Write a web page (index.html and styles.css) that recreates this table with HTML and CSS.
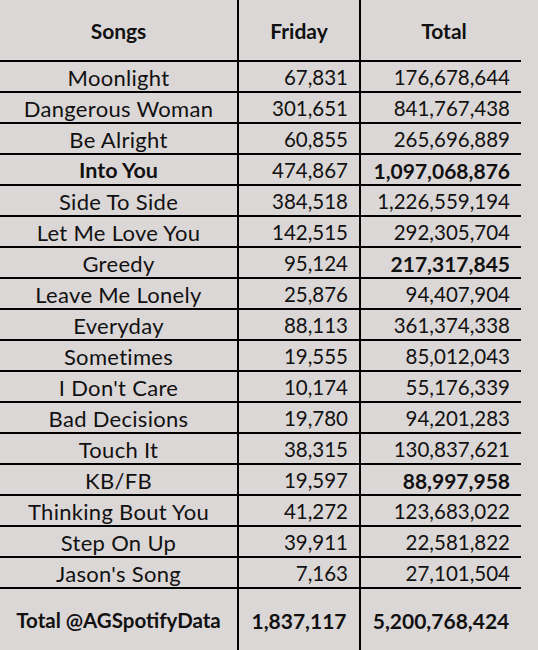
FILE: index.html
```html
<!DOCTYPE html>
<html>
<head>
<meta charset="utf-8">
<link rel="stylesheet" href="styles.css">
</head>
<body>
<table class="sheet">
  <thead>
    <tr class="head-row">
      <th class="col-song">Songs</th>
      <th class="col-day">Friday</th>
      <th class="col-total">Total</th>
    </tr>
  </thead>
  <tbody>
    <tr><td class="song">Moonlight</td><td class="num">67,831</td><td class="num">176,678,644</td></tr>
    <tr><td class="song">Dangerous Woman</td><td class="num">301,651</td><td class="num">841,767,438</td></tr>
    <tr><td class="song">Be Alright</td><td class="num">60,855</td><td class="num">265,696,889</td></tr>
    <tr><td class="song strong">Into You</td><td class="num">474,867</td><td class="num strong">1,097,068,876</td></tr>
    <tr><td class="song">Side To Side</td><td class="num">384,518</td><td class="num">1,226,559,194</td></tr>
    <tr><td class="song">Let Me Love You</td><td class="num">142,515</td><td class="num">292,305,704</td></tr>
    <tr><td class="song">Greedy</td><td class="num">95,124</td><td class="num strong">217,317,845</td></tr>
    <tr><td class="song">Leave Me Lonely</td><td class="num">25,876</td><td class="num">94,407,904</td></tr>
    <tr><td class="song">Everyday</td><td class="num">88,113</td><td class="num">361,374,338</td></tr>
    <tr><td class="song">Sometimes</td><td class="num">19,555</td><td class="num">85,012,043</td></tr>
    <tr><td class="song">I Don't Care</td><td class="num">10,174</td><td class="num">55,176,339</td></tr>
    <tr><td class="song">Bad Decisions</td><td class="num">19,780</td><td class="num">94,201,283</td></tr>
    <tr><td class="song">Touch It</td><td class="num">38,315</td><td class="num">130,837,621</td></tr>
    <tr><td class="song">KB/FB</td><td class="num">19,597</td><td class="num strong">88,997,958</td></tr>
    <tr><td class="song">Thinking Bout You</td><td class="num">41,272</td><td class="num">123,683,022</td></tr>
    <tr><td class="song">Step On Up</td><td class="num">39,911</td><td class="num">22,581,822</td></tr>
    <tr><td class="song">Jason's Song</td><td class="num">7,163</td><td class="num">27,101,504</td></tr>
  </tbody>
  <tfoot>
    <tr class="foot-row">
      <td class="foot-label">Total @AGSpotifyData</td>
      <td class="foot-num">1,837,117</td>
      <td class="foot-num">5,200,768,424</td>
    </tr>
  </tfoot>
</table>
</body>
</html>
```
FILE: styles.css
```css
html, body {
  margin: 0;
  padding: 0;
  background: #dcd7d7;
}
body {
  width: 538px;
  height: 650px;
  overflow: hidden;
  font-family: "Lato", "Open Sans", sans-serif;
  color: #111;
}
.sheet {
  border-collapse: collapse;
  width: 521px;
  table-layout: fixed;
}
.sheet th, .sheet td {
  padding: 0;
  line-height: 1;
  border: 2px solid #000;
  white-space: nowrap;
}
.sheet tr > :first-child { border-left: none; }
.sheet tr > :last-child { border-right: none; }
.sheet thead th { border-top: none; }
.sheet tfoot td { border-bottom: none; }
.col-song { width: 237px; }
.col-day { width: 120px; }
.col-total { width: auto; }
.head-row { height: 61px; }
.head-row th { font-weight: 700; text-align: center; font-size: 21px; }
.head-row .col-total { padding-left: 6px; }
.sheet tbody tr { height: 31px; }
.song { text-align: center; font-size: 22px; letter-spacing: 0.3px; padding-top: 2px !important; }
.num { text-align: right; padding-right: 11px !important; padding-top: 2px !important; font-size: 20.5px; }
.num.strong { font-size: 21px; }
.strong { font-weight: 700; }
.song.strong { font-size: 21.5px; letter-spacing: 0; }
.foot-row { height: 64px; }
.foot-label { text-align: center; font-weight: 700; font-size: 20.5px; }
.foot-num { text-align: center; font-weight: 700; font-size: 21px; }
```
